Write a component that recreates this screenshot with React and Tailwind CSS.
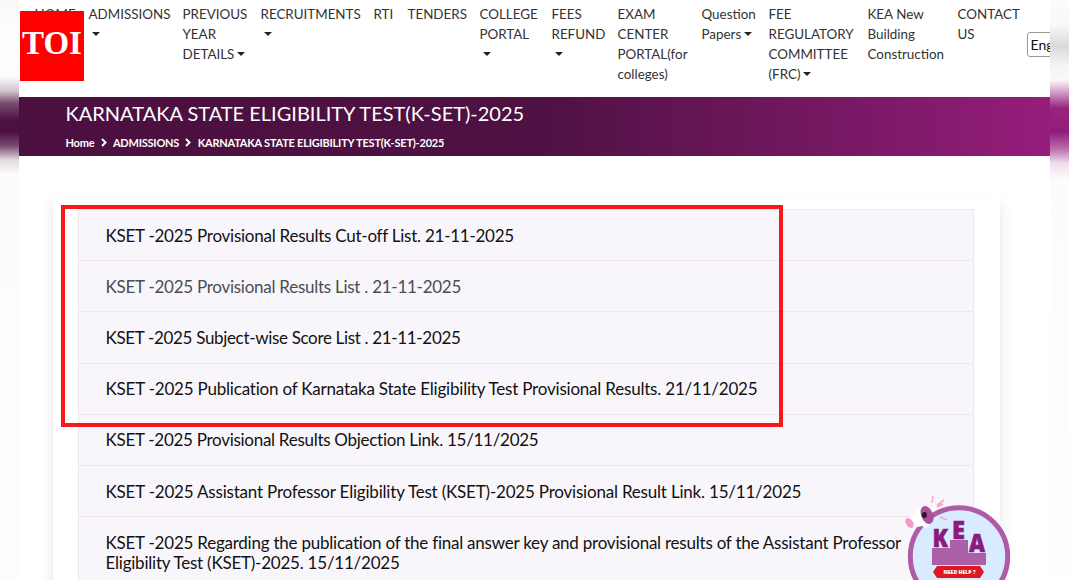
const navItems = [
  { lines: ["HOME"], width: "w-[54px]" },
  { lines: ["ADMISSIONS", ""], caret: true, width: "w-[94px]" },
  { lines: ["PREVIOUS", "YEAR", "DETAILS"], caret: true, width: "w-[78px]" },
  { lines: ["RECRUITMENTS", ""], caret: true, width: "w-[113px]" },
  { lines: ["RTI"], width: "w-[34px]" },
  { lines: ["TENDERS"], width: "w-[72px]" },
  { lines: ["COLLEGE", "PORTAL", ""], caret: true, width: "w-[72px]" },
  { lines: ["FEES", "REFUND", ""], caret: true, width: "w-[66px]" },
  { lines: ["EXAM", "CENTER", "PORTAL(for", "colleges)"], width: "w-[84px]" },
  { lines: ["Question", "Papers"], caret: true, width: "w-[67px]" },
  { lines: ["FEE", "REGULATORY", "COMMITTEE", "(FRC)"], caret: true, width: "w-[99px]" },
  { lines: ["KEA New", "Building", "Construction"], width: "w-[90px]" },
  { lines: ["CONTACT", "US"], width: "w-[69px]" },
];

const notices = [
  { lines: ["KSET -2025 Provisional Results Cut-off List. 21-11-2025"], tracking: "tracking-[-0.25px]" },
  { lines: ["KSET -2025 Provisional Results List . 21-11-2025"], tracking: "tracking-[-0.26px]", hovered: true },
  { lines: ["KSET -2025 Subject-wise Score List . 21-11-2025"], tracking: "tracking-[-0.33px]" },
  {
    lines: ["KSET -2025 Publication of Karnataka State Eligibility Test Provisional Results. 21/11/2025"],
    tracking: "tracking-[-0.205px]",
  },
  { lines: ["KSET -2025 Provisional Results Objection Link. 15/11/2025"], tracking: "tracking-[-0.28px]" },
  {
    lines: ["KSET -2025 Assistant Professor Eligibility Test (KSET)-2025 Provisional Result Link. 15/11/2025"],
    tracking: "tracking-[-0.2px]",
  },
  {
    lines: [
      "KSET -2025 Regarding the publication of the final answer key and provisional results of the Assistant Professor",
      "Eligibility Test (KSET)-2025. 15/11/2025",
    ],
    tracking: "tracking-[-0.23px]",
  },
];

function Caret({ alone }) {
  return (
    <span
      className={`inline-block border-x-4 border-t-4 border-x-transparent border-t-[#222] align-[3px] ${
        alone ? "ml-[3px]" : "ml-[3px]"
      }`}
    />
  );
}

function NavItem({ item }) {
  const last = item.lines.length - 1;
  return (
    <li className={`shrink-0 ${item.width}`}>
      {item.lines.map((line, i) => (
        <div key={i} className="h-5 whitespace-nowrap">
          {line}
          {item.caret && i === last ? <Caret alone={line === ""} /> : null}
        </div>
      ))}
    </li>
  );
}

function Header() {
  return (
    <header className="flex h-[97px] pl-[15.5px] pt-[4.4px] text-[13.4px] leading-5 text-[#333]">
      <ul className="flex">
        {navItems.map((item) => (
          <NavItem key={item.lines[0]} item={item} />
        ))}
      </ul>
      <div className="mt-[27.6px] h-[25px] w-20 shrink-0 rounded-[3px] border border-[#999] bg-white pl-[3px] text-[14px] leading-[24px] text-[#111]">
        English
      </div>
    </header>
  );
}

function Chevron() {
  return (
    <svg viewBox="0 0 6 9" className="mx-[6.3px] mb-0.5 h-[9px] w-1.5" fill="none" stroke="white" strokeWidth="2">
      <path d="M1 1l3.500 3.500L1 8" />
    </svg>
  );
}

function TitleBar() {
  return (
    <div className="h-[59px] bg-linear-to-r from-[#4b103f] via-[#4e1143] via-50% to-[#951d7b] pl-[46.5px] text-white">
      <h1 className="whitespace-nowrap pt-[3px] text-[20px] leading-[26px]">
        KARNATAKA STATE ELIGIBILITY TEST(K-SET)-2025
      </h1>
      <nav className="flex items-center whitespace-nowrap pt-[9px] text-[11px] font-bold leading-4 tracking-[-0.22px]">
        <span>Home</span>
        <Chevron />
        <span>ADMISSIONS</span>
        <Chevron />
        <span>KARNATAKA STATE ELIGIBILITY TEST(K-SET)-2025</span>
      </nav>
    </div>
  );
}

function NoticeRow({ notice }) {
  return (
    <li
      className={`min-h-[51.2px] whitespace-nowrap border-b border-[#ebe7ed] pl-[26.5px] pt-[15.6px] text-[17px] leading-5 last:min-h-[90px] ${
        notice.tracking
      } ${notice.hovered ? "text-[#494d52]" : "text-[#111]"}`}
    >
      {notice.lines.map((line) => (
        <div key={line}>{line}</div>
      ))}
    </li>
  );
}

function HelpBadge() {
  return (
    <svg viewBox="0 0 110 90" className="absolute left-[904px] top-[490px] h-[90px] w-[110px]">
      <circle cx="55" cy="66.5" r="48.7" fill="#d8ebff" stroke="#ad5da5" strokeWidth="5" />
      <path d="M28 58h18v-8h18v13h18v12H28z" fill="#ad5fa5" />
      <g fill="#8c1a7d" stroke="#8c1a7d" strokeWidth="0.6" fontFamily="'Open Sans', sans-serif" fontWeight="800" fontSize="25">
        <text x="28.5" y="56.5" textLength="15.5" lengthAdjust="spacingAndGlyphs">K</text>
        <text x="48" y="49" textLength="13" lengthAdjust="spacingAndGlyphs">E</text>
        <text x="65" y="62" textLength="16" lengthAdjust="spacingAndGlyphs">A</text>
      </g>
      <path d="M33 76h43l4 6-4 6H33l-4-6z" fill="#dd1820" />
      <text x="39.5" y="84.200" fontFamily="'Open Sans', sans-serif" fontWeight="800" fontSize="5.500" fill="white" textLength="32" lengthAdjust="spacingAndGlyphs">
        NEED HELP ?
      </text>
      <path d="M18 16L5 28l4 10 9-2 4 2 5-4z" fill="white" />
      <ellipse cx="5.500" cy="33" rx="3.500" ry="5.500" transform="rotate(-30 5.500 33)" fill="#f49acb" />
      <ellipse cx="23" cy="25" rx="5.800" ry="9.500" transform="rotate(-22 23 25)" fill="#a95297" />
      <ellipse cx="20.500" cy="25" rx="2.500" ry="3" fill="#35102f" />
      <path d="M29 6l-1 7M40 10l-7 5 6-1-6 3M36 27l7 3" fill="none" stroke="#f4a8cf" strokeWidth="1.600" />
    </svg>
  );
}

export default function App() {
  return (
    <div className="relative flex h-[580px] w-[1069px] overflow-hidden bg-white font-['Lato',sans-serif]">
      <div className="w-[19px] shrink-0 bg-[linear-gradient(180deg,#f8f8f8_0px,#fefefe_30px,#fdfdfd_76px,#d4c5d1_91px,#794d70_103px,#4d1141_120px,#4d1141_132px,#794d70_146px,#e2d9e0_160px,#fdfcfd_174px,#fdfdfd_580px)]" />

      <main className="w-[1031px] shrink-0 overflow-hidden">
        <Header />
        <TitleBar />
        <section className="ml-[34px] mt-[40px] h-[500px] w-[947px] bg-white pl-[25px] pt-[13px] shadow-[0_8px_12px_rgba(80,40,110,0.14)]">
          <ul className="w-[896px] border border-[#ebe7ed] bg-[#f9f6fb]">
            {notices.map((notice) => (
              <NoticeRow key={notice.lines[0]} notice={notice} />
            ))}
          </ul>
        </section>
      </main>

      <div className="w-[19px] shrink-0 bg-[linear-gradient(180deg,#fcfcfc_0px,#f8f8f8_25px,#d9d9d9_46px,#f3f3f3_65px,#fcf8fb_80px,#d2a0c8_92px,#972580_108px,#911b7a_132px,#bb6fad_149px,#efdcec_163px,#fdfcfd_180px,#fefefe_580px)]" />

      {/* highlight around the latest notices */}
      <div className="absolute left-[61px] top-[205px] h-[222px] w-[722px] border-4 border-[#f51919]" />

      <div className="absolute left-5 top-[11px] flex h-[70px] w-16 items-center justify-center bg-[#ff0000] pb-[5px] font-['Liberation_Serif',serif] text-[33px] font-bold leading-none text-white">
        TOI
      </div>

      <HelpBadge />
    </div>
  );
}
